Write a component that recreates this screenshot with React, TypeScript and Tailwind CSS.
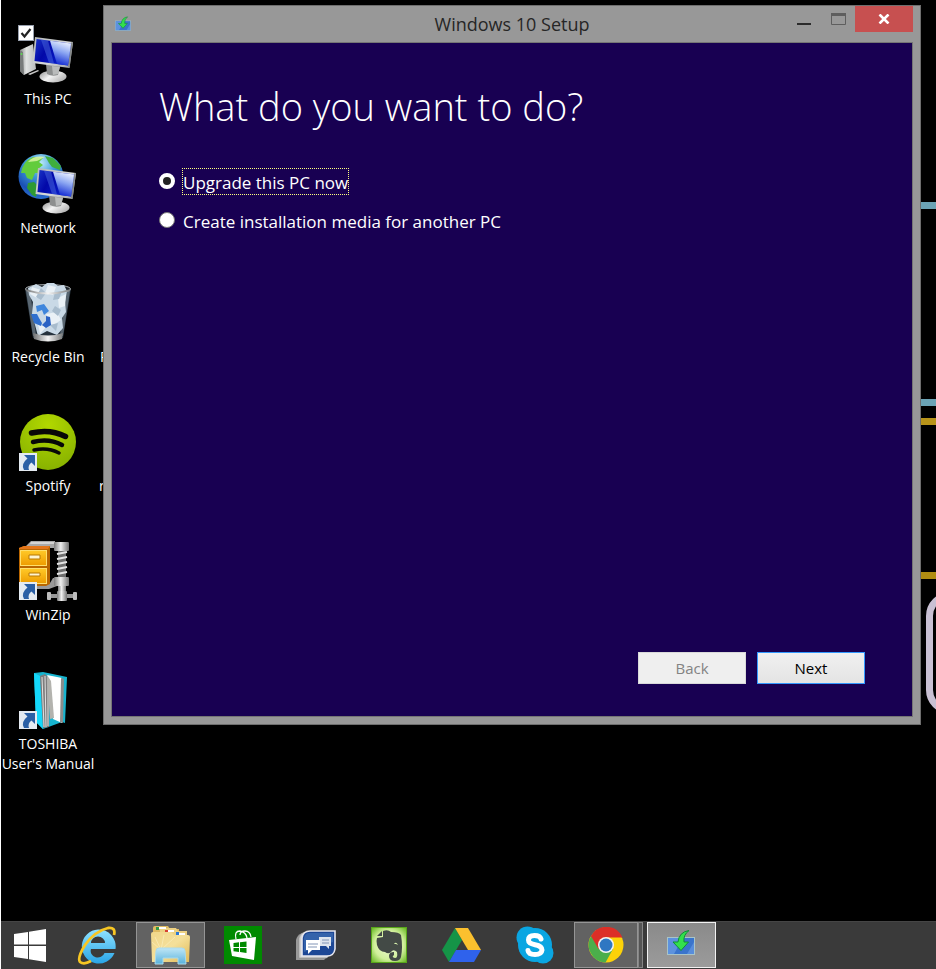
import React, { useState } from "react";

type Choice = "upgrade" | "media";

const Monitor = ({ id }: { id: string }) => (
  <g>
    <defs>
      <linearGradient id={`${id}-screen`} x1="0" y1="0" x2="1" y2="0.4">
        <stop offset="0" stopColor="#1a35c8" />
        <stop offset="0.4" stopColor="#0208a8" />
        <stop offset="1" stopColor="#0a22d0" />
      </linearGradient>
      <linearGradient id={`${id}-glare`} x1="0.7" y1="0" x2="0.4" y2="1">
        <stop offset="0" stopColor="#f2f6ff" />
        <stop offset="0.45" stopColor="#8ba6f2" />
        <stop offset="1" stopColor="#0a22d0" />
      </linearGradient>
      <linearGradient id={`${id}-base`} x1="0" y1="0" x2="1" y2="0.6">
        <stop offset="0" stopColor="#8c8c8c" />
        <stop offset="0.5" stopColor="#f4f4f4" />
        <stop offset="1" stopColor="#b5b5b5" />
      </linearGradient>
      <linearGradient id={`${id}-frame`} x1="0" y1="0" x2="1" y2="1">
        <stop offset="0" stopColor="#b4b7b8" />
        <stop offset="0.6" stopColor="#d8dadb" />
        <stop offset="1" stopColor="#9da0a1" />
      </linearGradient>
    </defs>
    <ellipse cx="37" cy="52.500" rx="13.500" ry="6" fill={`url(#${id}-base)`} />
    <path d="M30 40 L44 42 L42 51 Q36 53 31 50 Z" fill="#8d8f8f" />
    <path d="M36 42 L44 43 L42 50 L37 51 Z" fill="#b9bbbb" />
    <path d="M19 13 L57 18 L53.500 44 L16.500 39 Z" fill={`url(#${id}-frame)`} />
    <path d="M55 18.500 L57 18 L53.500 44 L51.500 42 Z" fill="#85898a" />
    <path d="M20.500 15 L55 19.500 L52 41.500 L18.500 37 Z" fill={`url(#${id}-screen)`} />
    <path d="M34 16.800 L55 19.500 L52 41.500 L41 40 Z" fill={`url(#${id}-glare)`} />
    <path d="M25 15.700 L32 16.600 L38 39.500 L33 39 Z" fill="#5d83ea" opacity="0.4" />
  </g>
);

const ShortcutArrow = () => (
  <g>
    <rect x="3" y="42" width="18" height="18" fill="#e4eaf1" />
    <path
      d="M8 44 H19 V55 L15.500 51.500 Q11.500 54 13 59 H8 Q4.500 53 11.500 47.500 Z"
      fill="#2a5fa5"
    />
  </g>
);

const ThisPcIcon = () => (
  <svg viewBox="0 0 64 64" className="size-16" aria-hidden="true">
    <defs>
      <linearGradient id="tower" x1="0" y1="0" x2="1" y2="0">
        <stop offset="0" stopColor="#8d8f8f" />
        <stop offset="0.4" stopColor="#e0e2e2" />
        <stop offset="1" stopColor="#b9bcbc" />
      </linearGradient>
    </defs>
    <path d="M4 26 L17 20 L20 45 L8 51 L4 47 Z" fill="url(#tower)" />
    <path d="M4 26 L7 28 L8 51 L4 47 Z" fill="#777a7a" />
    <path d="M12 50 L22 46 L23 47 L14 51 Z" fill="#c7c7c7" />
    <circle cx="5.500" cy="30" r="1" fill="#5bdc4c" />
    <Monitor id="pc" />
  </svg>
);

const NetworkIcon = () => (
  <svg viewBox="0 0 64 64" className="size-16" aria-hidden="true">
    <defs>
      <radialGradient id="globe" cx="0.5" cy="0.2" r="0.8">
        <stop offset="0" stopColor="#b8e8f8" />
        <stop offset="0.4" stopColor="#3f9ad8" />
        <stop offset="0.8" stopColor="#1a50b4" />
        <stop offset="1" stopColor="#2b6fd0" />
      </radialGradient>
    </defs>
    <circle cx="25" cy="23.500" r="22.500" fill="url(#globe)" />
    <path
      d="M5 20 Q7 8 17 4 L27 5 L23 9 L27 12 L22 16 L24 20 L19 20 L16 27 L11 25 L9 20 Z"
      fill="#62cc3c"
    />
    <path d="M29 3 L37 5 L45 13 L44 17 L36 14 L33 10 Z" fill="#3fae3c" />
    <path d="M12 30 L18 29 L22 33 L20 44 L16 42 L11 35 Z" fill="#2f9a33" />
    <path d="M12 9 Q18 2 29 4 L21 8 Z" fill="#e2f7a8" opacity="0.8" />
    <g transform="translate(3 2)">
      <Monitor id="net" />
    </g>
  </svg>
);

const RecycleBinIcon = () => (
  <svg viewBox="0 0 64 64" className="size-16" aria-hidden="true">
    <defs>
      <linearGradient id="metal" x1="0" y1="0" x2="1" y2="0">
        <stop offset="0" stopColor="#6d6f70" />
        <stop offset="0.5" stopColor="#f4f4f4" />
        <stop offset="1" stopColor="#77797a" />
      </linearGradient>
    </defs>
    <path d="M9 7 L55 7 L47 56 L17 56 Z" fill="#26323d" />
    <path d="M10 9 L14 9 L20 54 L17 54 Z M54 9 L50 9 L44 54 L47 54 Z" fill="#8b9aa6" opacity="0.5" />
    <ellipse cx="32" cy="7" rx="22.500" ry="4.500" fill="#1c242b" stroke="#a9adb0" />
    <path
      d="M12 6 L20 2 L26 5 L31 1 L38 1 L42 4 L48 3 L51 9 L49 20 L50 30 L46 36 L47 46 L41 53 L31 49 L22 54 L19 43 L16 32 L17 20 L13 13 Z"
      fill="#c9d9e6"
    />
    <path d="M16 5 L25 8 L21 16 L14 12 Z M32 3 L40 5 L37 13 L29 11 Z M42 16 L50 12 L49 24 L43 26 Z M30 32 L41 30 L45 38 L36 44 Z M22 42 L30 45 L24 52 Z" fill="#eaf1f6" />
    <path d="M25 6 L30 11 L25 18 L20 15 Z M39 10 L46 9 L43 17 L37 18 Z M39 24 L45 28 L42 34 L36 29 Z M34 43 L42 41 L40 49 Z" fill="#a8bccd" />
    <path d="M20 24 L28 22 L33 29 L28 33 L26 28 L21 30 Z" fill="#3f86dc" />
    <path d="M15 32 L21 32 L23 36 L26 41 L25 44 L18 41 Z" fill="#2f6fce" />
    <path d="M30 34 L34 35 L35 43 L30 46 L26 43 L30 39 Z" fill="#2b62c4" />
    <path d="M17 51 Q32 56 47 51 L46 57 Q32 62 18 57 Z" fill="url(#metal)" />
    <path d="M9 7 Q32 14 55 7 L54 9 Q32 16 10 9 Z" fill="url(#metal)" />
  </svg>
);

const SpotifyIcon = () => (
  <svg viewBox="0 0 64 64" className="size-16" aria-hidden="true">
    <defs>
      <radialGradient id="spotify" cx="0.5" cy="0.2" r="0.8">
        <stop offset="0" stopColor="#b2d800" />
        <stop offset="1" stopColor="#88b200" />
      </radialGradient>
    </defs>
    <circle cx="32" cy="31" r="28" fill="url(#spotify)" />
    <g fill="none" stroke="#080808" strokeLinecap="round">
      <path d="M15.500 22 Q34 17.500 49.500 25.500" strokeWidth="5.500" />
      <path d="M17 31 Q33 27 46 34" strokeWidth="4.500" />
      <path d="M18 39 Q32 36 43 42" strokeWidth="3.500" />
    </g>
    <ShortcutArrow />
  </svg>
);

const WinZipIcon = () => (
  <svg viewBox="0 0 64 64" className="size-16" aria-hidden="true">
    <defs>
      <linearGradient id="steel" x1="0" y1="0" x2="1" y2="0">
        <stop offset="0" stopColor="#7c7c7c" />
        <stop offset="0.45" stopColor="#efefef" />
        <stop offset="1" stopColor="#727272" />
      </linearGradient>
      <linearGradient id="cabinet" x1="0" y1="0" x2="0" y2="1">
        <stop offset="0" stopColor="#ffc928" />
        <stop offset="1" stopColor="#ee9c00" />
      </linearGradient>
    </defs>
    <path d="M10 6 L15 1 H39 V8 H34 L31 12 Z" fill="#a9a9a9" />
    <path d="M15 2 H39 V4 H14 Z" fill="#d4d4d4" />
    <path d="M21 45 L34 43 L37 38 H41 V46 L33 49 H21 Z" fill="#999" />
    <rect x="42" y="10" width="8" height="30" fill="#6f6f6f" />
    <path
      d="M41 14 L51 12 M41 19 L51 17 M41 24 L51 22 M41 29 L51 27 M41 34 L51 32"
      stroke="#e3e3e3"
      strokeWidth="2"
    />
    <rect x="38" y="2" width="15" height="9" rx="1" fill="url(#steel)" />
    <rect x="38" y="37" width="15" height="9" rx="1" fill="url(#steel)" />
    <rect x="42" y="46" width="8" height="15" fill="url(#steel)" />
    <rect x="34" y="54" width="25" height="4" fill="#999" />
    <rect x="31" y="52" width="4" height="8" rx="1" fill="#bdbdbd" />
    <rect x="57" y="52" width="4" height="8" rx="1" fill="#bdbdbd" />
    <rect x="41" y="51" width="10" height="10" rx="1" fill="url(#steel)" />
    <path d="M3 8 L8 6 H34 V44 L30 46 H3 Z" fill="#b96600" />
    <path d="M3 8 L8 6 H34 L32 9 H3 Z" fill="#e4761b" />
    <rect x="4.500" y="10.500" width="26" height="15" fill="url(#cabinet)" stroke="#ffdf6b" />
    <rect x="4.500" y="28.500" width="26" height="15" fill="url(#cabinet)" stroke="#ffdf6b" />
    <path d="M13 15 H24 V19 H13 Z M13 33 H24 V36 H13 Z" fill="#fff4cf" stroke="#b87900" />
    <ShortcutArrow />
  </svg>
);

const ManualIcon = () => (
  <svg viewBox="0 0 64 64" className="size-16" aria-hidden="true">
    <path d="M18 4 L27 3 L51 8 L49 54 L46 53 L27 60 L20 53 Z" fill="#17b4cf" />
    <path d="M18 4 L24 7 L27 60 L20 53 Z" fill="#14d8fb" />
    <path d="M24 7 L29 5 L34 11 L33 58 L27 59 Z" fill="#7d7d7d" />
    <path d="M26 8 L28 58 M29 7 L30 58 M32 9 L32 57" stroke="#e0e0e0" />
    <path d="M31 6 L46 9 L46 54 L37 50 L34 14 Z" fill="#fff" />
    <path d="M31 6 L35 12 L38 49 L34 50 Z" fill="#b3b3ae" />
    <path d="M45 9 L48 10 L47 54 L44 53 Z" fill="#8c8c8c" />
    <ShortcutArrow />
  </svg>
);

const SetupIcon = ({ className }: { className: string }) => (
  <svg viewBox="0 0 28 26" className={className} aria-hidden="true">
    <rect x="0.500" y="7.500" width="27" height="17" fill="#3a74cc" stroke="#a8c4c8" />
    <path d="M1 8 H16 L7 24 H1 Z" fill="#75a6ea" opacity="0.6" />
    <path d="M20 24 L27 12 V24 Z" fill="#75a6ea" opacity="0.5" />
    <path
      d="M22 0.500 Q12 2 11 12 L6 12 L14 20.500 L21.500 12 L17 12 Q16 5 22 0.500 Z"
      fill="#33e04c"
      stroke="#0f8f37"
    />
  </svg>
);

const StartIcon = () => (
  <svg viewBox="0 0 32 33" className="h-[33px] w-8" aria-hidden="true">
    <path
      d="M0 5 L14 3 V15.500 H0 Z M15 2.800 L32 0 V15.500 H15 Z M0 17 H14 V30 L0 28 Z M15 17 H32 V33 L15 30.200 Z"
      fill="#fff"
    />
  </svg>
);

const ExplorerBrowserIcon = () => (
  <svg viewBox="0 0 40 40" className="size-10" aria-hidden="true">
    <defs>
      <linearGradient id="ie" x1="0" y1="0" x2="0" y2="1">
        <stop offset="0" stopColor="#8fe2ff" />
        <stop offset="1" stopColor="#2aa5e6" />
      </linearGradient>
    </defs>
    <path
      fillRule="evenodd"
      d="M21 4.500 A17 17 0 1 0 37.500 28 H27.500 A7 6.500 0 0 1 14 24 H38.500 A17 17 0 0 0 21 4.500 Z M14 18 A7 6.500 0 0 1 28 18 Z"
      fill="url(#ie)"
    />
    <path
      d="M37 10 Q39 2 31 3 Q18 6 8 20 Q0 33 3 37 Q7 40 14 36"
      fill="none"
      stroke="#f7c623"
      strokeWidth="2.800"
    />
  </svg>
);

const FoldersIcon = () => (
  <svg viewBox="0 0 40 40" className="size-10" aria-hidden="true">
    <defs>
      <linearGradient id="folder" x1="0" y1="0" x2="1" y2="1">
        <stop offset="0" stopColor="#f0d68a" />
        <stop offset="0.5" stopColor="#f5e09a" />
        <stop offset="1" stopColor="#e0b955" />
      </linearGradient>
      <linearGradient id="tray" x1="0" y1="0" x2="0" y2="1">
        <stop offset="0" stopColor="#bfe6f6" />
        <stop offset="1" stopColor="#58b2dc" />
      </linearGradient>
    </defs>
    <path d="M3 3 Q3 1 5 1 H18 L20 4 H29 V36 H3 Z" fill="#dfbb62" />
    <path d="M10 5 Q10 3 12 3 H26 L28 6 H37 V36 H10 Z" fill="#edd183" />
    <path d="M7 2 H16 V4 H7 Z M16 5 H24 V7 H16 Z M27 8 H35 V10 H27 Z" fill="#fff" />
    <path d="M6 2 H9 V5 H6 Z" fill="#2f9a46" />
    <path d="M15 5 H18 V8 H15 Z" fill="#d64132" />
    <path d="M26 7 H29 V10 H26 Z" fill="#2c78d4" />
    <path d="M1 9 Q1 7 3 7 H21 L24 10 H38 Q40 10 40 12 L39 37 H2 Z" fill="url(#folder)" />
    <path d="M11 25 L2 17 M11 25 L5 12 M11 25 L14 10 M11 25 L25 12" stroke="#fff6cd" opacity="0.5" />
    <path d="M6 26 Q6 23 9 23 H32 Q35 23 35 26 L36 39 H28 V33 H13 V39 H5 Z" fill="url(#tray)" stroke="#a9daec" />
  </svg>
);

const StoreIcon = () => (
  <svg viewBox="0 0 38 38" className="size-[38px]" aria-hidden="true">
    <rect width="38" height="38" fill="#008a00" />
    <path d="M12 13 Q10 5 16 5 Q22 6 23 12 M16 9 Q16 5 21 5 Q26 5 27 11" fill="none" stroke="#fff" strokeWidth="1.300" />
    <path d="M5 14 L32 11 L30 34 L8 30 Z" fill="#fff" />
    <path d="M9.500 17 L15 16.300 V21 H9.500 Z M16 16.200 L22.500 15.500 V21 H16 Z M9.500 22 H15 V26 L9.500 25.200 Z M16 22 H22.500 V27 L16 26 Z" fill="#008a00" />
  </svg>
);

const MessagingIcon = () => (
  <svg viewBox="0 0 40 30" className="h-[30px] w-10" aria-hidden="true">
    <path d="M0 10 Q1 5 6 3 L34 3 V24 L28 30 H0 Z" fill="#999" />
    <path d="M3 8 Q4 3 9 2 H36 V22 L31 28 H3 Z" fill="#cfcfcf" stroke="#888" strokeWidth="0.500" />
    <path d="M6 8 Q7 1 14 1 H39 V19 Q38 26 31 26 H6 Z" fill="#1d4795" stroke="#e6e6ee" strokeWidth="1.600" />
    <path d="M8 8 Q9 3 14 3 H37 V12 L8 22 Z" fill="#4d7fc2" opacity="0.5" />
    <path d="M23 7 H35 V16 H33 V19 L30 16 H23 Z" fill="#dfe5ee" />
    <path d="M10 10 H24 V20 H16 L12 24 V20 H10 Z" fill="#fff" />
    <path d="M12 14 H22 M12 17 H21 M26 10 H33 M26 13 H33" stroke="#8295b6" />
  </svg>
);

const EvernoteIcon = () => (
  <svg viewBox="0 0 36 36" className="size-9" aria-hidden="true">
    <defs>
      <radialGradient id="evernote" r="0.7">
        <stop offset="0" stopColor="#f2fbdc" />
        <stop offset="0.6" stopColor="#d0f09a" />
        <stop offset="1" stopColor="#62b51c" />
      </radialGradient>
    </defs>
    <rect x="0.500" y="0.500" width="35" height="35" fill="url(#evernote)" stroke="#58a61a" />
    <path
      d="M12 4 Q17 2 20 5 Q28 5 30 8 Q32 20 30 30 Q29 34 24 34 Q18 34 18 29 Q18 25 23 25 V28 Q20 30 24 31 Q27 31 26 25 Q23 22 21 24 Q18 28 14 25 Q8 25 6 18 Q5 14 6 11 L12 10 Z"
      fill="#434a46"
    />
    <path d="M6 9 L11 4 V9 Z" fill="#434a46" />
    <path d="M23 17 Q25 14 27 18 L25 17 Z" fill="#d8f3ae" />
  </svg>
);

const DriveIcon = () => (
  <svg viewBox="0 0 39 34" className="h-[34px] w-[39px]" aria-hidden="true">
    <path d="M13 0 L0 22 L7 34 L20 12 Z" fill="#159447" />
    <path d="M13 0 H26 L39 22 H26 Z" fill="#fbc02e" />
    <path d="M14 22 H39 L32 34 H7 Z" fill="#2f62ec" />
  </svg>
);

const SkypeIcon = () => (
  <svg viewBox="0 0 38 38" className="size-[38px]" aria-hidden="true">
    <circle cx="19" cy="19" r="17" fill="#0aa6e2" />
    <circle cx="11.500" cy="11.500" r="11" fill="#0aa6e2" />
    <circle cx="27" cy="27" r="10.500" fill="#0aa6e2" />
    <path
      d="M25 13 Q24 9.500 18.500 9.500 Q12.500 9.500 12.500 14 Q12.500 17.500 19 18.700 Q26 20 26 24 Q25.500 28.500 19 28.500 Q12.500 28.500 12 24.500"
      fill="none"
      stroke="#fff"
      strokeWidth="5"
      strokeLinecap="round"
    />
  </svg>
);

const ChromeIcon = () => (
  <svg viewBox="0 0 36 36" className="size-9" aria-hidden="true">
    <circle cx="18" cy="18" r="17.500" fill="#fcd209" />
    <path d="M18 18 L3.500 8.500 A17.500 17.500 0 0 0 17.500 35.500 L25 22 Z" fill="#4bae4b" />
    <path d="M18 18 L10.500 22 L3 9 A17.500 17.500 0 0 1 34.500 10.500 H18 Z" fill="#dc2f27" />
    <circle cx="18" cy="18" r="8" fill="#f3f3f3" />
    <circle cx="18" cy="18" r="6.500" fill="#2f77c2" />
  </svg>
);

const desktopItems = [
  { name: "This PC", icon: <ThisPcIcon /> },
  { name: "Network", icon: <NetworkIcon /> },
  { name: "Recycle Bin", icon: <RecycleBinIcon /> },
  { name: "Spotify", icon: <SpotifyIcon /> },
  { name: "WinZip", icon: <WinZipIcon /> },
  { name: "TOSHIBA User's Manual", icon: <ManualIcon /> },
];

const pinnedApps = [
  { name: "Internet Explorer", icon: <ExplorerBrowserIcon />, open: false },
  { name: "File Explorer", icon: <FoldersIcon />, open: true },
  { name: "Store", icon: <StoreIcon />, open: false },
  { name: "Messaging", icon: <MessagingIcon />, open: false },
  { name: "Evernote", icon: <EvernoteIcon />, open: false },
  { name: "Google Drive", icon: <DriveIcon />, open: false },
  { name: "Skype", icon: <SkypeIcon />, open: false },
];

const options: { value: Choice; label: string }[] = [
  { value: "upgrade", label: "Upgrade this PC now" },
  { value: "media", label: "Create installation media for another PC" },
];

const DesktopIcons = () => {
  const [selected, setSelected] = useState(true);

  return (
    <ul className="w-[94px] shrink-0 pt-6">
      {desktopItems.map((item, index) => (
        <li key={item.name} className="relative min-h-[129px]">
          {index === 0 && (
            <label className="absolute top-px left-[17px] flex size-4 items-center justify-center bg-white">
              <input
                type="checkbox"
                aria-label="Select This PC"
                checked={selected}
                onChange={(e) => setSelected(e.target.checked)}
                className="absolute inset-0 appearance-none border border-gray-400"
              />
              {selected && (
                <svg viewBox="0 0 12 12" className="size-3" aria-hidden="true">
                  <path d="M1.500 6 L4.500 9.500 L10.500 2" fill="none" stroke="#222" strokeWidth="2.200" />
                </svg>
              )}
            </label>
          )}
          <button type="button" className="flex w-full flex-col items-center gap-px text-sm leading-5">
            {item.icon}
            <span>{item.name}</span>
          </button>
        </li>
      ))}
    </ul>
  );
};

const Wallpaper = () => (
  <div className="absolute inset-0 overflow-hidden" aria-hidden="true">
    <div className="absolute top-[202px] right-0 h-[7px] w-6 bg-[#6ba3b5]" />
    <div className="absolute top-[399px] right-0 h-[7px] w-6 bg-[#6ba3b5]" />
    <div className="absolute top-[418px] right-0 h-[7px] w-6 bg-[#b8941a]" />
    <div className="absolute top-[572px] right-0 h-[7px] w-6 bg-[#b08d12]" />
    <div className="absolute top-[592px] -right-[50px] h-[122px] w-[60px] rounded-[24px] border-[7px] border-[#c9c0d3]" />
    <span className="absolute top-[347px] left-[99px] text-sm leading-5">R</span>
    <span className="absolute top-[476px] left-[98px] text-sm leading-5">r</span>
  </div>
);

const SetupWindow = () => {
  const [choice, setChoice] = useState<Choice>("upgrade");

  return (
    <section className="relative mt-[5px] mr-[15px] ml-2 flex min-h-[720px] flex-1 flex-col self-start border border-[#6e6e6e] bg-[#989898] px-[7px] pb-[7px]">
      <header className="grid h-9 grid-cols-[1fr_auto_1fr] items-center text-[#262626]">
        <SetupIcon className="ml-1 size-4" />
        <h1 className="text-lg leading-6">Windows 10 Setup</h1>
        <div className="flex items-start justify-end self-start">
          <button type="button" aria-label="Minimize" className="flex h-[26px] w-[34px] items-center justify-center">
            <svg viewBox="0 0 14 14" className="size-[14px]" aria-hidden="true">
              <path d="M0 12 H14" stroke="#2b2b2b" strokeWidth="2" />
            </svg>
          </button>
          <button type="button" aria-label="Maximize" disabled className="flex h-[26px] w-[34px] items-center justify-center">
            <svg viewBox="0 0 15 12" className="h-3 w-[15px]" aria-hidden="true">
              <path d="M0.500 1.500 H14.500 V11.500 H0.500 Z" fill="none" stroke="#5e5e5e" />
              <path d="M0 1.500 H15" stroke="#5e5e5e" strokeWidth="3" />
            </svg>
          </button>
          <button type="button" aria-label="Close" className="flex h-[26px] w-[58px] items-center justify-center bg-[#c75050]">
            <svg viewBox="0 0 12 10" className="h-[10px] w-3" aria-hidden="true">
              <path d="M1.500 0.500 L10.500 9.500 M10.500 0.500 L1.500 9.500" stroke="#fff" strokeWidth="2.600" />
            </svg>
          </button>
        </div>
      </header>

      <form
        onSubmit={(e) => e.preventDefault()}
        className="flex flex-1 flex-col border border-[#757575] bg-[#180052] px-[47px] pt-[35px] pb-8"
      >
        <h2 id="question" className="text-[38px] leading-[56px] font-light">
          What do you want to do?
        </h2>

        <div role="radiogroup" aria-labelledby="question" className="mt-[34px] flex flex-col items-start gap-3">
          {options.map((option) => (
            <label key={option.value} className="flex items-center gap-[7px] text-[17px]">
              <input
                type="radio"
                name="choice"
                value={option.value}
                checked={choice === option.value}
                onChange={() => setChoice(option.value)}
                className="mb-0.5 size-4 appearance-none rounded-full border border-[#777] bg-white checked:border-4 checked:border-white checked:bg-[#222]"
              />
              <span
                className={`border pt-0.5 leading-[23px] ${
                  choice === option.value ? "border-dotted border-[#ffff80]" : "border-transparent"
                }`}
              >
                {option.label}
              </span>
            </label>
          ))}
        </div>

        <div className="mt-auto flex justify-end gap-[11px] text-[15px] leading-5">
          <button type="button" disabled className="h-8 w-[108px] border border-[#d9d9d9] bg-[#efefef] text-[#838383]">
            Back
          </button>
          <button
            type="submit"
            className="h-8 w-[108px] border border-[#3399ff] bg-linear-to-b from-[#f0f0f0] to-[#e4e4e4] text-black"
          >
            Next
          </button>
        </div>
      </form>
    </section>
  );
};

const Taskbar = () => (
  <nav className="flex h-12 gap-1 border-t border-[#454545] bg-[#3a3a3a] pb-px">
    <button type="button" aria-label="Start" className="flex w-[58px] items-center justify-center">
      <StartIcon />
    </button>
    {pinnedApps.map((app) => (
      <button
        key={app.name}
        type="button"
        aria-label={app.name}
        className={`flex w-[69px] items-center justify-center pr-0.5 ${
          app.open ? "border border-[#959595] bg-[#626262]" : ""
        }`}
      >
        {app.icon}
      </button>
    ))}
    <button type="button" aria-label="Google Chrome" className="flex w-[69px]">
      <span className="flex h-full flex-1 items-center justify-center border border-[#959595] bg-[#626262]">
        <ChromeIcon />
      </span>
      <span className="h-full w-[5px] border border-[#858585] bg-[#555]" />
    </button>
    <button
      type="button"
      aria-label="Windows 10 Setup"
      className="flex w-[69px] items-center justify-center border border-[#f2f2f2] bg-linear-to-b from-[#8a8a8a] to-[#9b9b9b] pr-0.5 pb-1"
    >
      <SetupIcon className="h-[26px] w-7" />
    </button>
  </nav>
);

const App = () => {
  return (
    <div className="flex min-h-screen flex-col border-l border-white bg-black font-['Open_Sans','Noto_Sans',sans-serif] text-white">
      <main className="relative flex flex-1">
        <Wallpaper />
        <DesktopIcons />
        <SetupWindow />
      </main>
      <Taskbar />
    </div>
  );
};

export default App;
